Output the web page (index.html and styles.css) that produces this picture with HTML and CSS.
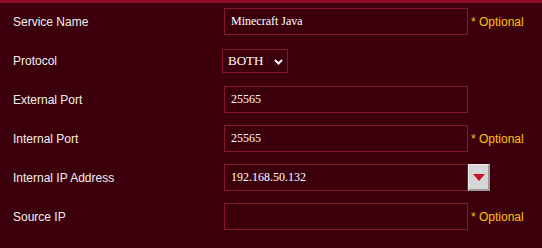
FILE: index.html
```html
<!DOCTYPE html>
<html lang="en">
<head>
    <meta charset="UTF-8">
    <title>Port Forwarding</title>
    <link rel="stylesheet" href="styles.css">
</head>
<body>
    <div class="form">
        <div class="row">
            <div class="label">Service Name</div>
            <input type="text" class="field" value="Minecraft Java">
            <span class="hint">* Optional</span>
        </div>
        <div class="row">
            <div class="label">Protocol</div>
            <span class="select-wrap">
                <select class="select">
                    <option>BOTH</option>
                    <option>TCP</option>
                    <option>UDP</option>
                </select>
                <svg class="chevron" width="9" height="6" viewBox="0 0 9 6">
                    <path d="M1 1 L4.5 4.5 L8 1" fill="none" stroke="#fff" stroke-width="2"/>
                </svg>
            </span>
        </div>
        <div class="row">
            <div class="label">External Port</div>
            <input type="text" class="field" value="25565">
        </div>
        <div class="row">
            <div class="label">Internal Port</div>
            <input type="text" class="field" value="25565">
            <span class="hint">* Optional</span>
        </div>
        <div class="row">
            <div class="label">Internal IP Address</div>
            <input type="text" class="field" value="192.168.50.132">
            <div class="pick-btn">
                <svg width="12" height="7" viewBox="0 0 12 7">
                    <path d="M0 0 H12 L6 7 Z" fill="#c8102e"/>
                </svg>
            </div>
        </div>
        <div class="row">
            <div class="label">Source IP</div>
            <input type="text" class="field" value="">
            <span class="hint">* Optional</span>
        </div>
    </div>
</body>
</html>
```

FILE: styles.css
```css
* {
    margin: 0;
    padding: 0;
    box-sizing: border-box;
}

body {
    width: 542px;
    height: 248px;
    background-color: #3b000b;
    border-top: 3px solid #8e0c27;
    overflow: hidden;
    font-family: Arial, "Liberation Sans", sans-serif;
}

.form {
    padding-top: 5px;
}

.row {
    display: flex;
    align-items: center;
    height: 27px;
    margin-bottom: 12px;
}

.label {
    width: 224px;
    padding-left: 13px;
    color: #f0f0f0;
    font-size: 12px;
}

.field {
    width: 244px;
    height: 27px;
    padding-left: 6px;
    border: 1px solid #84172b;
    background: #3b000b;
    color: #ffffff;
    font-family: "Liberation Serif", "Times New Roman", serif;
    font-size: 12px;
    outline: none;
}

.hint {
    margin-left: 3px;
    color: #ffc107;
    font-size: 12px;
}

.select-wrap {
    position: relative;
    margin-left: -2px;
}

.select {
    appearance: none;
    -webkit-appearance: none;
    width: 66px;
    height: 24px;
    padding-left: 5px;
    border: 1px solid #84172b;
    background: #3b000b;
    color: #ffffff;
    font-family: "Liberation Serif", "Times New Roman", serif;
    font-size: 13px;
    outline: none;
    display: block;
}

.chevron {
    position: absolute;
    right: 5px;
    top: 10px;
    pointer-events: none;
}

.pick-btn {
    width: 22px;
    height: 27px;
    display: flex;
    align-items: center;
    justify-content: center;
    background: #d6d6d6;
    border-right: 2px solid #9a9a9a;
    border-bottom: 2px solid #9a9a9a;
    border-top: 1px solid #ececec;
    border-left: 1px solid #ececec;
}
```
